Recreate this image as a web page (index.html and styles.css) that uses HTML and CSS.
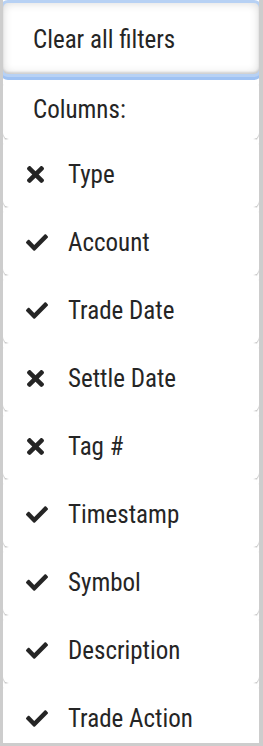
FILE: index.html
```html
<!DOCTYPE html>
<html>
<head>
<meta charset="utf-8">
<link rel="stylesheet" href="styles.css">
</head>
<body>
<div class="panel">
  <div class="list">
    <div class="clear-btn">Clear all filters</div>
    <div class="item header">Columns:</div>
    <div class="item"><span class="icon"><svg class="x" viewBox="0 80 352 352"><path d="M242.72 256l100.07-100.07c12.28-12.28 12.28-32.19 0-44.480l-22.24-22.24c-12.28-12.28-32.19-12.28-44.48 0L176 189.28 75.93 89.21c-12.28-12.28-32.19-12.28-44.48 0L9.21 111.45c-12.28 12.28-12.28 32.19 0 44.48L109.28 256 9.21 356.07c-12.28 12.28-12.28 32.19 0 44.48l22.24 22.24c12.28 12.28 32.2 12.28 44.48 0L176 322.72l100.07 100.07c12.28 12.28 32.2 12.28 44.48 0l22.240-22.24c12.28-12.28 12.28-32.19 0-44.48L242.72 256z"/></svg></span><span class="label">Type</span></div>
    <div class="item"><span class="icon"><svg class="check" viewBox="0 64 512 384"><path d="M173.898 439.404l-166.4-166.4c-9.997-9.997-9.997-26.206 0-36.204l36.203-36.204c9.997-9.998 26.207-9.998 36.204 0L192 312.69 432.095 72.596c9.997-9.997 26.207-9.997 36.204 0l36.203 36.204c9.997 9.997 9.997 26.206 0 36.204l-294.4 294.401c-9.998 9.997-26.207 9.997-36.204-.001z"/></svg></span><span class="label">Account</span></div>
    <div class="item"><span class="icon"><svg class="check" viewBox="0 64 512 384"><path d="M173.898 439.404l-166.4-166.4c-9.997-9.997-9.997-26.206 0-36.204l36.203-36.204c9.997-9.998 26.207-9.998 36.204 0L192 312.69 432.095 72.596c9.997-9.997 26.207-9.997 36.204 0l36.203 36.204c9.997 9.997 9.997 26.206 0 36.204l-294.4 294.401c-9.998 9.997-26.207 9.997-36.204-.001z"/></svg></span><span class="label">Trade Date</span></div>
    <div class="item"><span class="icon"><svg class="x" viewBox="0 80 352 352"><path d="M242.72 256l100.07-100.07c12.28-12.28 12.28-32.19 0-44.480l-22.24-22.24c-12.28-12.28-32.19-12.28-44.48 0L176 189.28 75.93 89.21c-12.28-12.28-32.19-12.28-44.48 0L9.21 111.45c-12.28 12.28-12.28 32.19 0 44.48L109.28 256 9.21 356.07c-12.28 12.28-12.28 32.19 0 44.48l22.24 22.24c12.28 12.28 32.2 12.28 44.48 0L176 322.72l100.07 100.07c12.28 12.28 32.2 12.28 44.48 0l22.240-22.24c12.28-12.28 12.28-32.19 0-44.48L242.72 256z"/></svg></span><span class="label">Settle Date</span></div>
    <div class="item"><span class="icon"><svg class="x" viewBox="0 80 352 352"><path d="M242.72 256l100.07-100.07c12.28-12.28 12.28-32.19 0-44.480l-22.24-22.24c-12.28-12.28-32.19-12.28-44.48 0L176 189.28 75.93 89.21c-12.28-12.28-32.19-12.28-44.48 0L9.21 111.45c-12.28 12.28-12.28 32.19 0 44.48L109.28 256 9.21 356.07c-12.28 12.28-12.28 32.19 0 44.48l22.24 22.24c12.28 12.28 32.2 12.28 44.48 0L176 322.72l100.07 100.07c12.28 12.28 32.2 12.28 44.48 0l22.240-22.24c12.28-12.28 12.28-32.19 0-44.48L242.72 256z"/></svg></span><span class="label">Tag #</span></div>
    <div class="item"><span class="icon"><svg class="check" viewBox="0 64 512 384"><path d="M173.898 439.404l-166.4-166.4c-9.997-9.997-9.997-26.206 0-36.204l36.203-36.204c9.997-9.998 26.207-9.998 36.204 0L192 312.69 432.095 72.596c9.997-9.997 26.207-9.997 36.204 0l36.203 36.204c9.997 9.997 9.997 26.206 0 36.204l-294.4 294.401c-9.998 9.997-26.207 9.997-36.204-.001z"/></svg></span><span class="label">Timestamp</span></div>
    <div class="item"><span class="icon"><svg class="check" viewBox="0 64 512 384"><path d="M173.898 439.404l-166.4-166.4c-9.997-9.997-9.997-26.206 0-36.204l36.203-36.204c9.997-9.998 26.207-9.998 36.204 0L192 312.69 432.095 72.596c9.997-9.997 26.207-9.997 36.204 0l36.203 36.204c9.997 9.997 9.997 26.206 0 36.204l-294.4 294.401c-9.998 9.997-26.207 9.997-36.204-.001z"/></svg></span><span class="label">Symbol</span></div>
    <div class="item"><span class="icon"><svg class="check" viewBox="0 64 512 384"><path d="M173.898 439.404l-166.4-166.4c-9.997-9.997-9.997-26.206 0-36.204l36.203-36.204c9.997-9.998 26.207-9.998 36.204 0L192 312.69 432.095 72.596c9.997-9.997 26.207-9.997 36.204 0l36.203 36.204c9.997 9.997 9.997 26.206 0 36.204l-294.4 294.401c-9.998 9.997-26.207 9.997-36.204-.001z"/></svg></span><span class="label">Description</span></div>
    <div class="item"><span class="icon"><svg class="check" viewBox="0 64 512 384"><path d="M173.898 439.404l-166.4-166.4c-9.997-9.997-9.997-26.206 0-36.204l36.203-36.204c9.997-9.998 26.207-9.998 36.204 0L192 312.69 432.095 72.596c9.997-9.997 26.207-9.997 36.204 0l36.203 36.204c9.997 9.997 9.997 26.206 0 36.204l-294.4 294.401c-9.998 9.997-26.207 9.997-36.204-.001z"/></svg></span><span class="label">Trade Action</span></div>
  </div>
</div>
</body>
</html>
```

FILE: styles.css
```css
html, body {
  margin: 0;
  padding: 0;
  background: #fff;
}
body {
  width: 263px;
  height: 746px;
  overflow: hidden;
  font-family: Roboto, "Liberation Sans", sans-serif;
  color: #252525;
}
.panel {
  box-sizing: border-box;
  width: 263px;
  height: 746px;
  border-style: solid;
  border-color: #cdcdcd;
  border-width: 0 4px 3px 3px;
  background: #fff;
}
.list {
  height: 743px;
  overflow: hidden;
  display: flex;
  flex-direction: column;
}
.clear-btn {
  flex: none;
  box-sizing: border-box;
  height: 71px;
  margin: 3px 0 6px 0;
  padding: 1px 0 0 30px;
  display: flex;
  align-items: center;
  font-size: 25px;
  font-stretch: 87.5%;
  border-radius: 5px;
  background: #fff;
  box-shadow: 0 0 0 3px #b7d1f4, 0 3px 0 3px #9fc2f3, inset 0 0 10px rgba(0, 0, 0, 0.16), inset 0 -2px 2px rgba(0, 0, 0, 0.12);
}
.item {
  flex: none;
  box-sizing: border-box;
  height: 68px;
  display: flex;
  align-items: center;
  padding: 2px 0 0 23px;
  font-size: 25px;
  font-stretch: 87.5%;
  border-radius: 6px;
  background: #fff;
  box-shadow: 0 1px 0 #c9c9c9, 0 2px 1px rgba(0, 0, 0, 0.12);
  position: relative;
}
.item.header {
  height: 59px;
  padding-left: 30px;
  padding-top: 0;
}
.icon {
  width: 42px;
  display: flex;
  align-items: center;
}
.icon svg {
  fill: #252525;
  display: block;
}
.icon .check {
  width: 22px;
  height: 17px;
}
.icon .x {
  width: 17px;
  height: 17px;
  margin-left: 1px;
}
```
